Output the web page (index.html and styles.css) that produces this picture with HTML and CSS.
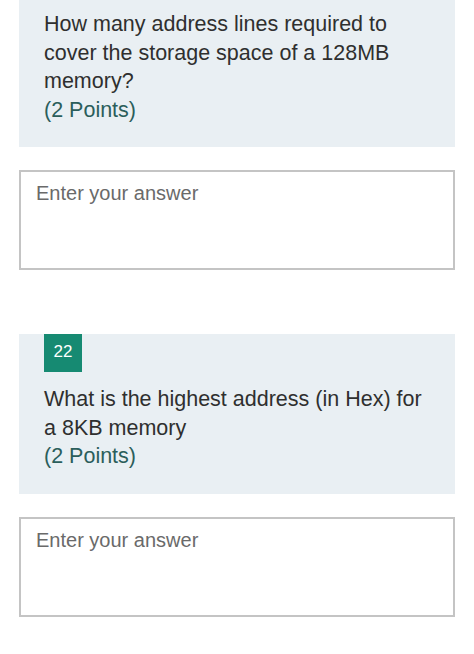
FILE: index.html
```html
<!DOCTYPE html>
<html>
<head>
<meta charset="utf-8">
<link rel="stylesheet" href="styles.css">
</head>
<body>
<main class="form">
  <section class="question first">
    <p class="q-text">How many address lines required to cover the storage space of a 128MB memory?</p>
    <p class="q-points">(2 Points)</p>
  </section>
  <div class="answer">Enter your answer</div>

  <section class="question second">
    <div class="badge">22</div>
    <p class="q-text">What is the highest address (in Hex) for a 8KB memory</p>
    <p class="q-points">(2 Points)</p>
  </section>
  <div class="answer">Enter your answer</div>
</main>
</body>
</html>
```
FILE: styles.css
```css
html, body {
  margin: 0;
  padding: 0;
  background: #ffffff;
}
body {
  font-family: "Liberation Sans", Arial, sans-serif;
}
.form {
  display: flex;
  flex-direction: column;
  padding: 0 19px;
}
.question {
  background: #e9eff3;
  padding: 10px 24px 22px 25px;
  font-size: 21.5px;
  line-height: 28.7px;
  color: #2f2f2f;
}
.question.second {
  margin-top: 64px;
  padding-top: 0;
  padding-bottom: 23px;
}
.q-text, .q-points {
  margin: 0;
}
.q-points {
  color: #2b5e5b;
}
.badge {
  width: 38px;
  height: 38px;
  background: #168a72;
  color: #ffffff;
  font-size: 17px;
  display: flex;
  align-items: center;
  justify-content: center;
  margin-bottom: 13px;
}
.answer {
  margin-top: 23px;
  height: 100px;
  box-sizing: border-box;
  border: 2px solid #c4c4c4;
  padding: 9px 15px;
  font-size: 20px;
  line-height: 24px;
  color: #6a6a6a;
}
```
